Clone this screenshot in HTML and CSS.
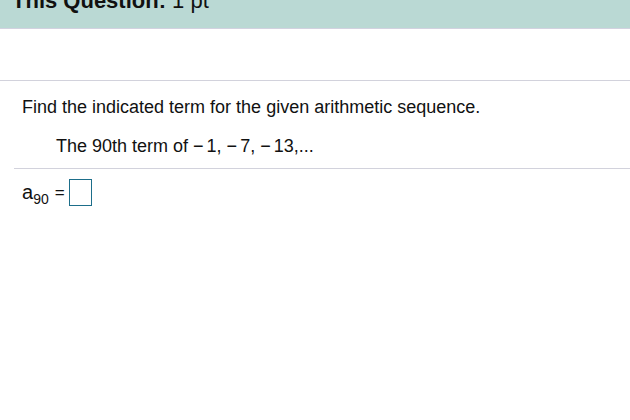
FILE: index.html
```html
<!DOCTYPE html>
<html>
<head>
<meta charset="utf-8">
<link rel="stylesheet" href="styles.css">
</head>
<body>
<div class="header"><h1 class="title"><b>This Question:</b> 1 pt</h1></div>
<div class="spacer"></div>
<div class="question">
  <p class="prompt">Find the indicated term for the given arithmetic sequence.</p>
  <p class="seq">The 90th term of <span class="math"><span class="neg">−</span>1, <span class="neg">−</span>7, <span class="neg">−</span>13,...</span></p>
  <div class="rule"></div>
  <div class="answer">
    <span class="var">a<sub class="sub">90</sub></span><span class="eq">=</span><span class="box"></span>
  </div>
</div>
</body>
</html>
```
FILE: styles.css
```css
html, body {
  margin: 0;
  padding: 0;
  background: #fff;
  font-family: "Liberation Sans", Arial, sans-serif;
  color: #111;
}
.header {
  height: 28px;
  background: #bad9d4;
  border-bottom: 1px solid #d2d2e0;
  overflow: hidden;
}
.title {
  margin: -10px 0 0 12px;
  font-size: 22px;
  line-height: 22px;
  font-weight: normal;
  color: #111;
}
.title b { font-weight: bold; }
.spacer { height: 51px; }
.question {
  border-top: 1px solid #d2d2dc;
}
.prompt {
  margin: 15px 0 0 22px;
  font-size: 18px;
  line-height: 22px;
}
.seq {
  margin: 17px 0 0 56px;
  font-size: 18px;
  line-height: 22px;
}
.neg { margin-right: 3px; }
.rule {
  margin: 11px 0 0 14px;
  border-top: 1px solid #d2d2dc;
}
.answer {
  display: flex;
  align-items: flex-start;
  margin: 10px 0 0 22px;
}
.var {
  font-size: 20px;
  line-height: 27px;
}
.sub {
  font-size: 14px;
  line-height: 0;
  vertical-align: -5px;
}
.eq {
  font-size: 17px;
  line-height: 27px;
  margin: 0 4px 0 6px;
}
.box {
  width: 21px;
  height: 25px;
  border: 1px solid #1d6e8a;
}
```
